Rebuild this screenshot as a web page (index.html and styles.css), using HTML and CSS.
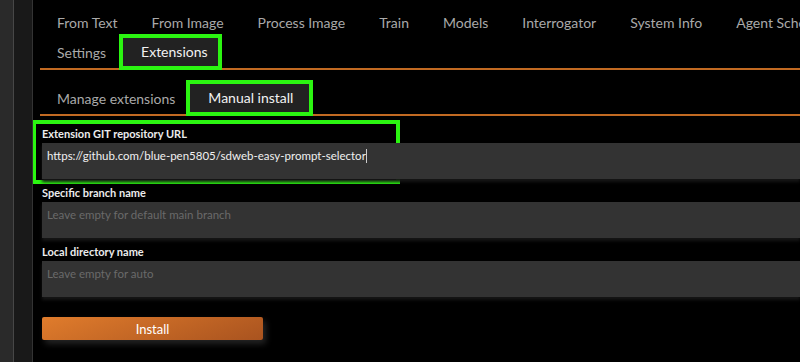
FILE: index.html
```html
<!DOCTYPE html>
<html lang="en">
<head>
  <meta charset="UTF-8">
  <title>Extensions</title>
  <link rel="stylesheet" href="styles.css">
</head>
<body>
  <div class="rail rail-outer"></div>
  <div class="rail rail-inner"></div>

  <main class="main">
    <nav class="tabs">
      <span class="tab">From Text</span>
      <span class="tab">From Image</span>
      <span class="tab">Process Image</span>
      <span class="tab">Train</span>
      <span class="tab">Models</span>
      <span class="tab">Interrogator</span>
      <span class="tab">System Info</span>
      <span class="tab">Agent Scheduler</span>
      <span class="tab">Settings</span>
      <span class="tab active marked">Extensions</span>
    </nav>

    <nav class="tabs subtabs">
      <span class="tab">Manage extensions</span>
      <span class="tab active marked">Manual install</span>
    </nav>

    <form class="form">
      <div class="field">
        <span class="mark"></span>
        <label>Extension GIT repository URL</label>
        <div class="input">https://github.com/blue-pen5805/sdweb-easy-prompt-selector<span class="caret"></span></div>
      </div>
      <div class="field">
        <label>Specific branch name</label>
        <div class="input placeholder">Leave empty for default main branch</div>
      </div>
      <div class="field">
        <label>Local directory name</label>
        <div class="input placeholder">Leave empty for auto</div>
      </div>
      <button type="button" class="install">Install</button>
    </form>
  </main>
</body>
</html>
```

FILE: styles.css
```css
body {
  margin: 0;
  background-color: #000;
  color: #ddd;
  font-family: 'Lato', sans-serif;
  display: flex;
  height: 362px;
  overflow: hidden;
}
.rail {
  flex: none;
  height: 100%;
}
.rail-outer {
  width: 13px;
  background-color: #2a2a2a;
  border-right: 1px solid #474747;
}
.rail-inner {
  width: 18px;
  background-color: #191919;
  border-right: 1px solid #333;
}
.main {
  flex: 1;
  padding-left: 7px;
  min-width: 0;
  overflow: hidden;
}
.tabs {
  display: flex;
  flex-wrap: wrap;
  padding-top: 8px;
  border-bottom: 2px solid #c26a22;
  width: 860px;
  font-size: 14px;
}
.tab {
  padding: 0 17px;
  height: 30px;
  line-height: 30px;
  color: #a9a9a9;
  white-space: nowrap;
}
.tab.active {
  background-color: #222;
  color: #f2f2f2;
  margin-bottom: 2px;
  height: 28px;
  line-height: 28px;
  padding: 0 10px 0 18px;
}
.marked {
  outline: 4px solid #2bf511;
}
.tabs .tab:nth-child(8) {
  padding-right: 60px;
}
.subtabs {
  padding-top: 14px;
}
.subtabs .tab:first-child {
  padding-right: 15px;
}
.subtabs .tab.active {
  padding-right: 16px;
}
.form {
  padding: 11px 0 0 2px;
}
.field {
  position: relative;
  margin-bottom: 7px;
}
.field label {
  display: block;
  font-size: 11px;
  font-weight: 700;
  color: #ececec;
  height: 14px;
  line-height: 14px;
  margin-bottom: 2px;
}
.mark {
  position: absolute;
  left: -10px;
  top: -7px;
  width: 368px;
  height: 64px;
  border: 4px solid #2bf511;
  box-sizing: border-box;
}
.input {
  position: relative;
  height: 36px;
  background-color: #333;
  box-shadow: 0 3px 3px #161616;
  font-size: 11.5px;
  color: #f0f0f0;
  padding: 6px 5px;
  box-sizing: border-box;
  white-space: nowrap;
}
.input.placeholder {
  color: #6a6a6a;
}
.caret {
  display: inline-block;
  width: 1px;
  height: 14px;
  background-color: #ccc;
  vertical-align: -3px;
}
.install {
  display: block;
  margin-top: 20px;
  width: 221px;
  height: 23px;
  border: none;
  border-radius: 2px;
  background: linear-gradient(160deg, #e07c2c, #a9531f);
  color: #fff;
  font-family: 'Lato', sans-serif;
  font-size: 13px;
  box-shadow: 3px 4px 6px rgba(40, 40, 40, 0.9);
  padding: 0;
}
```
